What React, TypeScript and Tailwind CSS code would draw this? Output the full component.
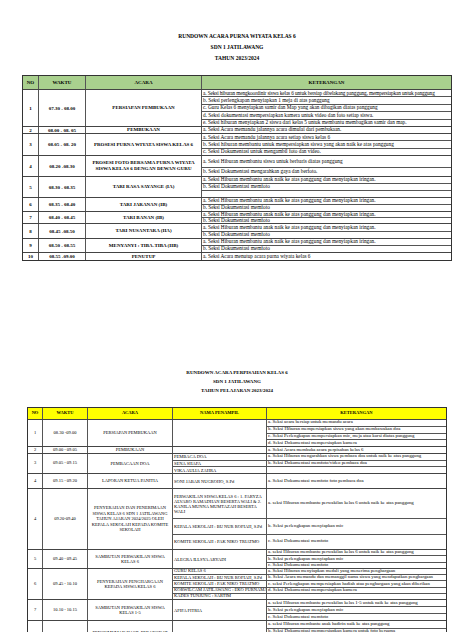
type Line = string | [string, string];

interface RowA {
  no: string;
  waktu: string;
  acara: string;
  h: string;
  ket: Line[];
}

interface RowB {
  no: string;
  waktu: string;
  acara: string;
  h: string;
  nama: Line[];
  ket: Line[];
  nw?: boolean;
}

const hiburanNaik = 'a. Seksi Hiburan membantu anak naik ke atas panggung dan menyiapkan iringan.';
const dokFoto = 'b. Seksi Dokumentasi memfoto';

const rowsA: RowA[] = [
  {
    no: '1',
    waktu: '07.30 - 08.00',
    acara: 'PERSIAPAN PEMBUKAAN',
    h: 'h-[37px]',
    ket: [
      [
        'a. Seksi hiburan mengkoordinir siswa kelas 6 untuk bersiap dibelakang panggung, mempersiapkan untuk panggung',
        'flex-1 tracking-[-0.12px]',
      ],
      'b. Seksi perlengkapan menyiapkan 1 meja di atas panggung',
      'c. Guru Kelas 6 menyiapkan samir dan Map yang akan dibagikan diatas panggung',
      'd. Seksi dokumentasi mempersiapkan kamera untuk video dan foto setiap siswa.',
      'e. Seksi hiburan menyiapkan 2 siswa dari kelas 5 untuk membantu membagikan samir dan map.',
    ],
  },
  {
    no: '2',
    waktu: '08.00 - 08. 05',
    acara: 'PEMBUKAAN',
    h: 'h-[7px]',
    ket: ['a. Seksi Acara memandu jalannya acara dimulai dari pembukaan.'],
  },
  {
    no: '3',
    waktu: '08.05 - 08. 20',
    acara: 'PROSESI PURNA WIYATA SISWA KELAS 6',
    h: 'h-[22px]',
    ket: [
      'a. Seksi Acara memandu jalannya acara setiap siswa kelas 6',
      'b. Seksi hiburan membantu untuk mempersiapkan siswa yang akan naik ke atas panggung',
      'c. Seksi Dokumentasi untuk mengambil foto dan video.',
    ],
  },
  {
    no: '4',
    waktu: '08.20 -08.30',
    acara: 'PROSESI FOTO BERSAMA PURNA WIYATA SISWA KELAS 6 DENGAN DEWAN GURU',
    h: 'h-[21px]',
    ket: [
      ['a. Seksi Hiburan membantu siswa untuk berbaris diatas panggung', 'flex-[1.4]'],
      'b. Seksi Dokumentasi mengarahkan gaya dan berfoto.',
    ],
  },
  { no: '5', waktu: '08.30 - 08.35', acara: 'TARI RASA SAYANGE (IA)', h: 'h-[21px]', ket: [hiburanNaik, dokFoto, ''] },
  { no: '6', waktu: '08.35 - 08.40', acara: 'TARI JARANAN (IB)', h: 'h-[14px]', ket: [hiburanNaik, dokFoto] },
  { no: '7', waktu: '08.40 - 08.45', acara: 'TARI BANAN (IB)', h: 'h-[12px]', ket: [hiburanNaik, dokFoto] },
  { no: '8', waktu: '08.45 -08.50', acara: 'TARI NUSANTARA (IIA)', h: 'h-[15px]', ket: [hiburanNaik, dokFoto] },
  { no: '9', waktu: '08.50 - 08.55', acara: 'MENYANYI : TIBA-TIBA (IIB)', h: 'h-[14px]', ket: [hiburanNaik, dokFoto] },
  {
    no: '10',
    waktu: '08.55 -09.00',
    acara: 'PENUTUP',
    h: 'h-[8px]',
    ket: ['a. Seksi Acara menutup acara purna wiyata kelas 6'],
  },
];

const rowsB: RowB[] = [
  {
    no: '1',
    waktu: '08.30 -09.00',
    acara: 'PERSIAPAN PEMBUKAAN',
    h: 'h-[27px]',
    nama: [''],
    ket: [
      'a. Seksi acara bersiap untuk memandu acara',
      'b. Seksi Hiburan mempersiapkan siswa yang akan membawakan doa',
      'c. Seksi Perlengkapan mempersiapkan mic, meja atau kursi diatas panggung',
      'd. Seksi Dokumentasi mempersiapkan kamera',
    ],
  },
  {
    no: '2',
    waktu: '09.00 - 09.05',
    acara: 'PEMBUKAAN',
    h: 'h-[7px]',
    nama: [''],
    ket: ['a. Seksi Acara membuka acara perpisahan kelas 6'],
  },
  {
    no: '3',
    waktu: '09.05 - 09.15',
    acara: 'PEMBACAAN DOA',
    h: 'h-[20px]',
    nama: ['PEMBACA DOA', 'SENA SHAFA', 'VIKA AULIA ZAHRA'],
    ket: [
      'a. Seksi Hiburan mengarahkan siswa pembaca doa untuk naik ke atas panggung',
      'b. Seksi Dokumentasi memfoto/video  pembaca doa',
      '',
    ],
  },
  {
    no: '4',
    waktu: '09.15 - 09.20',
    acara: 'LAPORAN KETUA PANITIA',
    h: 'h-[15px]',
    nama: ['SONI JABAR NUGROHO, S.Pd'],
    ket: ['a. Seksi Dokumentasi memfoto foto  pembaca doa'],
  },
  {
    no: '4',
    waktu: '09.20-09.40',
    acara: 'PENYERAHAN DAN PENERIMAAN SISWA KELAS 6 SDN 1 JATILAWANG TAHUN AJARAN 2024/2025 OLEH KEPALA SEKOLAH KEPADA KOMITE SEKOLAH',
    h: 'h-[61px]',
    nama: [
      ['PERWAKILAN SISWA KELAS 6 : 1. FARYZA ALVARO RAMADHAN BESERTA WALI & 2. KANILA MUNNA MUMTAZAH BESERTA WALI', 'flex-[31]'],
      ['KEPALA SEKOLAH : BU NUR ROFIAH, S.Pd', 'flex-[15]'],
      ['KOMITE SEKOLAH : PAK NIKO TRIATMO', 'flex-[15]'],
    ],
    ket: [
      ['a. seksi Hiburan membantu perwakilan kelas 6 untuk naik ke atas panggung', 'flex-[31]'],
      ['b. Seksi perlengkapan menyiapkan mic', 'flex-[15]'],
      ['c. Seksi Dokumentasi memfoto', 'flex-[15]'],
    ],
  },
  {
    no: '5',
    waktu: '09.40 - 09.45',
    acara: 'SAMBUTAN  PERWAKILAN SISWA KELAS 6',
    h: 'h-[19px]',
    nama: ['ALEGRA ILLSYA ARYADI'],
    ket: [
      'a. seksi Hiburan membantu perwakilan kelas 6 untuk naik ke atas panggung',
      'b. Seksi perlengkapan menyiapkan mic',
      'c. Seksi Dokumentasi memfoto',
    ],
  },
  {
    no: '6',
    waktu: '09.45 - 10.10',
    acara: 'PENYERAHAN PENGHARGAAN KEPADA SISWA KELAS 6',
    h: 'h-[31px]',
    nw: true,
    nama: [
      'GURU KELAS 6',
      'KEPALA SEKOLAH : BU NUR ROFIAH, S.Pd',
      'KOMITE SEKOLAH : PAK NIKO TRIATMO',
      'KORWILCAM JATILAWANG : EKO PURNAMA',
      'KADES TUNJUNG : SARTIM',
    ],
    ket: [
      'a. Seksi Hiburan menyiapkan medali yang menerima penghargaan',
      'b. Seksi Acara memandu dan memanggil nama siswa yang mendapatkan penghargaan',
      'c. seksi Perlengkapan mempersiapkan hadiah atau penghargaan yang akan diberikan',
      'd. Seksi Dokumentasi mempersiapkan kamera',
      '',
    ],
  },
  {
    no: '7',
    waktu: '10.10 - 10.15',
    acara: 'SAMBUTAN PERWAKILAN SISWA KELAS 1-5',
    h: 'h-[21px]',
    nama: ['AFIFA FITRIA'],
    ket: [
      'a. seksi Hiburan membantu perwakilan kelas 1-5 untuk naik ke atas panggung',
      'b. Seksi perlengkapan menyiapkan mic',
      'c. Seksi Dokumentasi memfoto',
    ],
  },
  {
    no: '8',
    waktu: '10.15 - 10.30',
    acara: 'PENGUMUMAN HASIL PERANGKAT PEMBELAJARAN KELAS 6',
    h: 'h-[30px]',
    nama: ['1.(1) : BSB ( 5 ) : 68 BSB 100'],
    ket: [
      'a. seksi Hiburan membantu anak hadirin naik ke atas panggung',
      'b. Seksi Dokumentasi mempersiapkan kamera untuk foto bersama',
      'c. Seksi Dokumentasi memfoto',
      '',
    ],
  },
];

function Stack({ lines, text }: { lines: Line[]; text: string }) {
  return (
    <div className="flex-1 flex flex-col min-w-0">
      {lines.map((l, i) => {
        const [t, c] = typeof l === 'string' ? [l, 'flex-1'] : l;
        return (
          <div
            key={i}
            className={`${c} min-h-0 flex items-center px-[1px] overflow-hidden ${text} ${i > 0 ? 'border-t border-[#555]' : ''}`}
          >
            {t}
          </div>
        );
      })}
    </div>
  );
}

function TableA() {
  return (
    <div className="mx-[22px] border border-[#333] text-black">
      <div className="flex h-[13px] bg-[#a9d08e] font-bold text-[5px] leading-none">
        <div className="w-[15px] flex items-center justify-center">NO</div>
        <div className="w-[47px] border-l border-[#555] flex items-center justify-center">WAKTU</div>
        <div className="w-[116px] border-l border-[#555] flex items-center justify-center">ACARA</div>
        <div className="flex-1 border-l border-[#555] flex items-center justify-center">KETERANGAN</div>
      </div>
      {rowsA.map((r) => (
        <div key={r.no} className={`flex ${r.h} border-t border-[#444]`}>
          <div className="w-[15px] flex items-center justify-center font-bold text-[5px] leading-none">{r.no}</div>
          <div className="w-[47px] border-l border-[#555] flex items-center justify-center font-bold text-[5px] leading-none">
            {r.waktu}
          </div>
          <div className="w-[116px] border-l border-[#555] flex items-center justify-center text-center font-bold text-[5px] leading-[6px] px-[1px]">
            {r.acara}
          </div>
          <div className="flex-1 flex border-l border-[#555] min-w-0">
            <Stack lines={r.ket} text="text-[5.3px] leading-none whitespace-nowrap" />
          </div>
        </div>
      ))}
    </div>
  );
}

function TableB() {
  return (
    <div className="ml-[27px] w-[420px] border-l border-r border-t border-[#333] text-black">
      <div className="flex h-[11px] bg-[#ffff00] font-bold text-[4.5px] leading-none">
        <div className="w-[14px] flex items-center justify-center">NO</div>
        <div className="w-[45px] border-l border-[#555] flex items-center justify-center">WAKTU</div>
        <div className="w-[85px] border-l border-[#555] flex items-center justify-center">ACARA</div>
        <div className="w-[94px] border-l border-[#555] flex items-center justify-center">NAMA PENAMPIL</div>
        <div className="flex-1 border-l border-[#555] flex items-center justify-center">KETERANGAN</div>
      </div>
      {rowsB.map((r, i) => (
        <div key={i} className={`flex ${r.h} border-t border-[#444] shrink-0`}>
          <div className="w-[14px] flex items-center justify-center text-[4.5px] leading-none">{r.no}</div>
          <div className="w-[45px] border-l border-[#555] flex items-center justify-center text-[4.5px] leading-none">
            {r.waktu}
          </div>
          <div className="w-[85px] border-l border-[#555] flex items-center justify-center text-center text-[4.5px] leading-[5.5px] px-[2px]">
            {r.acara}
          </div>
          <div className="w-[94px] flex border-l border-[#555] min-w-0">
            <Stack
              lines={r.nama}
              text={r.nw ? 'text-[4.5px] leading-none whitespace-nowrap' : 'text-[4.5px] leading-[5px]'}
            />
          </div>
          <div className="flex-1 flex border-l border-[#555] min-w-0">
            <Stack lines={r.ket} text="text-[4.8px] leading-none whitespace-nowrap" />
          </div>
        </div>
      ))}
    </div>
  );
}

export default function App() {
  return (
    <div className="w-[474px] h-[632px] overflow-hidden bg-white font-['Liberation_Serif',serif] text-black">
      <div className="pt-[31px] flex flex-col items-center font-bold text-[5.5px] leading-[11px]">
        <div>RUNDOWN ACARA PURNA WIYATA KELAS 6</div>
        <div>SDN 1 JATILAWANG</div>
        <div>TAHUN 2023/2024</div>
      </div>
      <div className="mt-[11px]">
        <TableA />
      </div>
      <div className="mt-[107px] flex flex-col items-center font-bold text-[5px] leading-[9px]">
        <div>RUNDOWN ACARA PERPISAHAN KELAS 6</div>
        <div>SDN 1 JATILAWANG</div>
        <div>TAHUN PELAJARAN 2023/2024</div>
      </div>
      <div className="mt-[12px]">
        <TableB />
      </div>
    </div>
  );
}
